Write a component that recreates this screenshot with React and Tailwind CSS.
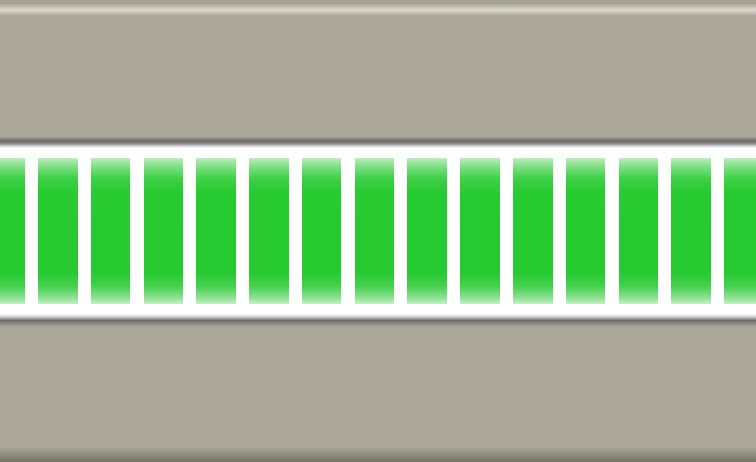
import React from "react";

export default function App() {
  const segs = Array.from({ length: 16 });
  return (
    <div className="w-[756px] h-[462px] overflow-hidden flex flex-col bg-[#aca899]">
      <div className="h-[4px] shrink-0 bg-[#a6a294]" />
      <div className="h-[12px] shrink-0 bg-gradient-to-b from-[#aca899] via-[#dcd9d0] to-[#aca899]" />
      <div className="h-[121px] shrink-0 bg-[#aca899]" />
      <div className="h-[11px] shrink-0 bg-[linear-gradient(to_bottom,#a3a092_0%,#6c6b66_35%,#7d7c78_55%,#d9d9d9_85%,#ffffff_100%)]" />
      <div className="h-[166px] shrink-0 bg-white flex flex-col">
        <div className="h-[10px] shrink-0" />
        <div className="h-[146px] shrink-0 flex gap-[13.2px] ml-[-14.8px] blur-[0.7px]">
          {segs.map((_, i) => (
            <div
              key={i}
              className="w-[39.6px] shrink-0 h-full bg-[linear-gradient(to_bottom,#bdeebd_0%,#7ddf82_6%,#3fd047_14%,#28ca31_24%,#26c930_78%,#47d04f_88%,#8fe294_96%,#c4f0c4_100%)]"
            />
          ))}
        </div>
        <div className="h-[10px] shrink-0" />
      </div>
      <div className="h-[13px] shrink-0 bg-[linear-gradient(to_bottom,#ffffff_0%,#d4d4d2_20%,#6e6d68_50%,#8e8c82_75%,#aca899_100%)]" />
      <div className="h-[120px] shrink-0 bg-[#aca899]" />
      <div className="flex-1 bg-gradient-to-b from-[#aca899] to-[#747263]" />
    </div>
  );
}
